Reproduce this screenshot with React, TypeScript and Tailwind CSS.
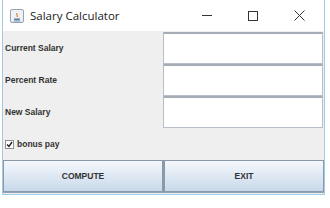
export default function App() {
  const label = "text-[8.5px] font-bold text-[#333333] pl-[2px]";
  const field = "bg-white border border-[#b8bec6] border-t-[#a5acb5] border-t-2";
  return (
    <div className="w-[330px] h-[208px] bg-white font-['Liberation_Sans',sans-serif]">
      <div className="ml-[2px] w-[323px] h-[195px] border-l border-r border-b border-[#9ecbe8] flex flex-col">
        {/* title bar */}
        <div className="h-[31px] flex items-center bg-white">
          <div className="ml-[7px] w-[14px] h-[14px] border border-[#9aa3ad] rounded-[2px] bg-[#eef1f5] flex items-end justify-center">
            <svg width="10" height="10" viewBox="0 0 10 10">
              <path d="M5 1 C3.5 2.5 6.5 3.5 5 5" stroke="#e76f00" strokeWidth="1" fill="none" />
              <path d="M2 6.5 H8 V7.5 C8 8.5 2 8.5 2 7.5 Z" fill="#5382a1" />
              <path d="M1.5 9 H8.5" stroke="#5382a1" strokeWidth="0.8" />
            </svg>
          </div>
          <span className="ml-[6px] text-[11.5px] text-[#1a1a1a] font-['Open_Sans',sans-serif] leading-none">Salary Calculator</span>
          <div className="ml-auto mr-[2px] flex items-center h-full">
            <div className="w-[46px] h-full flex items-center justify-center">
              <div className="w-[10px] h-px bg-[#333]" />
            </div>
            <div className="w-[46px] h-full flex items-center justify-center">
              <div className="w-[10px] h-[10px] border border-[#333]" />
            </div>
            <div className="w-[46px] h-full flex items-center justify-center">
              <svg width="11" height="11" viewBox="0 0 11 11">
                <path d="M0.5 0.5 L10.5 10.5 M10.5 0.5 L0.5 10.5" stroke="#333" strokeWidth="1" />
              </svg>
            </div>
          </div>
        </div>
        {/* content */}
        <div className="flex-1 bg-[#efefef] flex flex-col">
          <div className="grid grid-cols-[160px_1fr] grid-rows-[32px_32px_32px] mt-[1px] mr-[1px]">
            <div className="flex items-center"><span className={label}>Current Salary</span></div>
            <div className={field} />
            <div className="flex items-center"><span className={label}>Percent Rate</span></div>
            <div className={field} />
            <div className="flex items-center"><span className={label}>New Salary</span></div>
            <div className={field} />
          </div>
          <div className="h-[32px] flex items-center pl-[2px]">
            <div className="w-[9px] h-[9px] border border-[#8f8f8f] bg-white flex items-center justify-center">
              <svg width="7" height="7" viewBox="0 0 7 7">
                <path d="M1 3.5 L3 5.5 L6 1" stroke="#222" strokeWidth="1.4" fill="none" />
              </svg>
            </div>
            <span className="ml-[3px] text-[8.5px] font-bold text-[#333333]">bonus pay</span>
          </div>
          <div className="flex h-[33px] border-b border-[#8fa3b8]">
            <button className="w-[160px] h-full border border-[#8a9aab] bg-gradient-to-b from-[#f4f8fc] to-[#c9d9ea] text-[8.5px] font-bold text-[#333]">
              COMPUTE
            </button>
            <button className="flex-1 h-full border border-[#8a9aab] border-l-2 bg-gradient-to-b from-[#f4f8fc] to-[#c9d9ea] text-[8.5px] font-bold text-[#333]">
              EXIT
            </button>
          </div>
        </div>
      </div>
    </div>
  );
}
